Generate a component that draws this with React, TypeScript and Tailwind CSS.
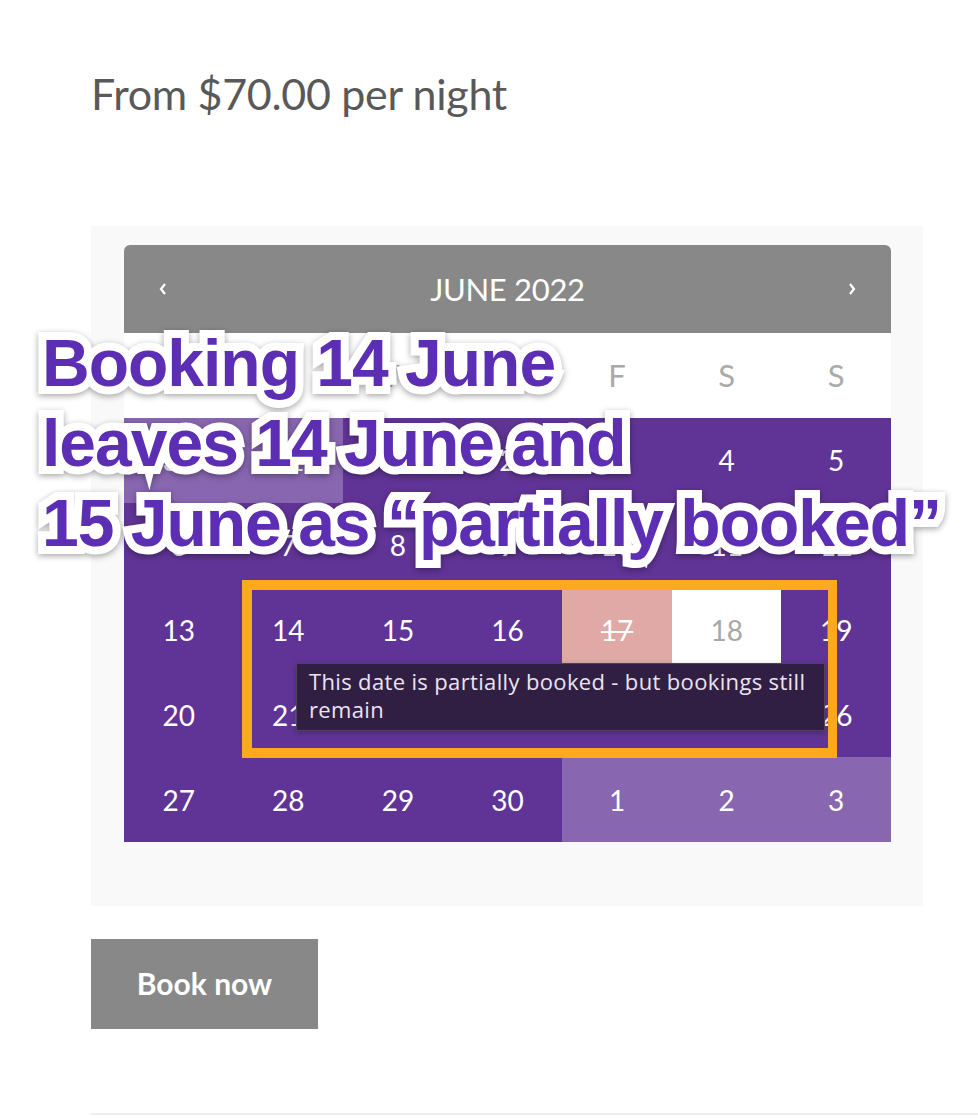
import React from 'react';

type Day = { n: number; kind?: 'other' | 'booked' | 'unavailable' };

const weeks: Day[][] = [
  [{ n: 30, kind: 'other' }, { n: 31, kind: 'other' }, { n: 1 }, { n: 2 }, { n: 3 }, { n: 4 }, { n: 5 }],
  [{ n: 6 }, { n: 7 }, { n: 8 }, { n: 9 }, { n: 10 }, { n: 11 }, { n: 12 }],
  [{ n: 13 }, { n: 14 }, { n: 15 }, { n: 16 }, { n: 17, kind: 'booked' }, { n: 18, kind: 'unavailable' }, { n: 19 }],
  [{ n: 20 }, { n: 21 }, { n: 22 }, { n: 23 }, { n: 24 }, { n: 25 }, { n: 26 }],
  [{ n: 27 }, { n: 28 }, { n: 29 }, { n: 30 }, { n: 1, kind: 'other' }, { n: 2, kind: 'other' }, { n: 3, kind: 'other' }],
];

const weekdays = ['M', 'T', 'W', 'T', 'F', 'S', 'S'];

function DayCell({ day }: { day: Day }) {
  if (day.kind === 'booked') {
    return (
      <div className="flex items-center justify-center bg-[#e0a9a6] text-white line-through decoration-2">
        {day.n}
      </div>
    );
  }
  if (day.kind === 'unavailable') {
    return <div className="flex items-center justify-center bg-white text-[#a8a8a8]">{day.n}</div>;
  }
  return (
    <div
      className={
        day.kind === 'other'
          ? 'flex items-center justify-center bg-[#8866b0] text-white'
          : 'flex items-center justify-center bg-[#603496] text-white'
      }
    >
      {day.n}
    </div>
  );
}

export default function App() {
  return (
    <div className="relative w-[978px] h-[1118px] overflow-hidden bg-white font-['Lato',sans-serif]">
      <div className="pl-[91px] pt-[66px]">
        <p className="text-[43px] leading-[56px] text-[#595959] tracking-[-0.3px]">From $70.00 per night</p>

        {/* booking calendar */}
        <div className="mt-[104px] w-[832px] bg-[#f9f9f9] pt-[19px] pl-[33px] pr-[32px] pb-[64px]">
          <div className="relative">
            <div className="flex h-[88px] items-center justify-between rounded-t-[6px] bg-[#888888] px-[34px] text-white">
              <svg width="10" height="14" viewBox="0 0 10 14" fill="none" stroke="white" strokeWidth="2.2">
                <path d="M7 2 L3 7 L7 12" />
              </svg>
              <span className="text-[31px] tracking-[-0.3px]">JUNE 2022</span>
              <svg width="10" height="14" viewBox="0 0 10 14" fill="none" stroke="white" strokeWidth="2.2">
                <path d="M3 2 L7 7 L3 12" />
              </svg>
            </div>
            <div className="grid h-[85px] grid-cols-7 bg-white text-[31px] text-[#aaaaaa]">
              {weekdays.map((w, i) => (
                <div key={i} className="flex items-center justify-center">
                  {w}
                </div>
              ))}
            </div>
            <div className="grid grid-cols-7 auto-rows-[84.8px] text-[28px]">
              {weeks.flat().map((d, i) => (
                <DayCell key={i} day={d} />
              ))}
            </div>

            {/* highlight around the partially booked dates */}
            <div className="pointer-events-none absolute left-[118px] top-[335px] h-[178px] w-[595px] border-[10px] border-r-[9px] border-[#fcaa1d]" />

            <div className="absolute left-[172px] top-[418px] w-[529px] border border-[#4d4458] bg-[#301f42] pl-[12px] pr-[8px] pt-[3px] pb-[7px] font-['Open_Sans',sans-serif] text-[22px] leading-[28px] tracking-[0.35px] text-[#ebe4f0] shadow-[0_2px_6px_rgba(0,0,0,0.25)]">
              This date is partially booked - but bookings still remain
            </div>
          </div>
        </div>

        <button className="mt-[33px] h-[90px] w-[227px] bg-[#888888] text-[30px] font-bold text-white">
          Book now
        </button>
      </div>

      <div className="absolute left-[91px] right-0 top-[1113px] h-[2px] bg-[#eeeeee]" />

      {/* annotation caption */}
      <div className="absolute left-[42px] top-[323px] font-['Liberation_Sans',Arial,sans-serif] text-[66px] font-bold leading-[80px] tracking-[-1px] text-[#5b2eb4] [paint-order:stroke_fill] [-webkit-text-stroke:16px_white] drop-shadow-[0_2px_3px_rgba(0,0,0,0.35)]">
        <div>Booking 14 June</div>
        <div>leaves 14 June and</div>
        <div>15 June as “partially booked”</div>
      </div>
    </div>
  );
}
